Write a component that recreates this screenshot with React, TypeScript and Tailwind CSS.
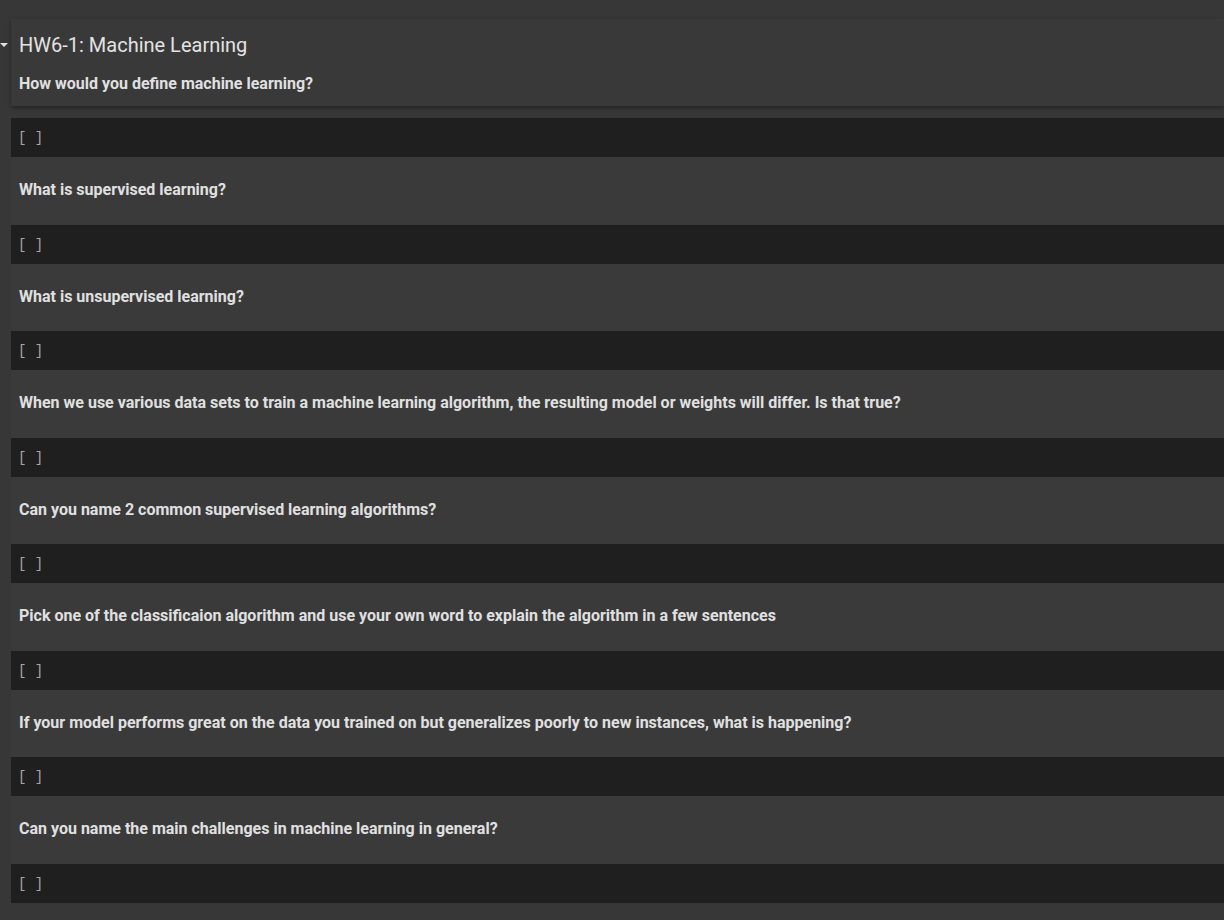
import React from "react";

const questions = [
  "How would you define machine learning?",
  "What is supervised learning?",
  "What is unsupervised learning?",
  "When we use various data sets to train a machine learning algorithm, the resulting model or weights will differ. Is that true?",
  "Can you name 2 common supervised learning algorithms?",
  "Pick one of the classificaion algorithm and use your own word to explain the algorithm in a few sentences",
  "If your model performs great on the data you trained on but generalizes poorly to new instances, what is happening?",
  "Can you name the main challenges in machine learning in general?",
];

function CodeCell() {
  return (
    <div className="h-[39px] bg-[#1f1f1f] flex items-center pl-[7px]">
      <span className="text-[14px] leading-[16px] text-[#a6a6a6] pt-[1px]" style={{ fontFamily: '"Liberation Mono", monospace' }}>
        [&nbsp;]
      </span>
    </div>
  );
}

export default function App() {
  return (
    <div
      className="w-[1224px] h-[920px] overflow-hidden bg-[#373737] pt-[19px]"
      style={{ fontFamily: 'Roboto, "Noto Sans", sans-serif' }}
    >
      <div className="relative">
        <span className="absolute left-0 top-[24px] w-0 h-0 border-l-[4px] border-r-[4px] border-t-[4px] border-l-transparent border-r-transparent border-t-[#e0e0e0]" />
        <div className="ml-[11px] h-[87px] bg-[#393939] shadow-[0_2px_4px_rgba(0,0,0,0.35)] pl-[8px] pt-[14px] flex flex-col">
          <div className="text-[20px] leading-[24px] text-[#e3e3e3]">HW6-1: Machine Learning</div>
          <div className="mt-[17px] text-[16px] leading-[20px] font-bold text-[#e0e0e0]">{questions[0]}</div>
        </div>
      </div>
      <div className="ml-[11px] mt-[12px] flex flex-col">
        {questions.map((q, i) => (
          <React.Fragment key={i}>
            {i > 0 && (
              <div className="h-[67.57px] bg-[#3a3a3a] pl-[8px] pt-[23px]">
                <div className="text-[16px] leading-[20px] font-bold text-[#e0e0e0]">{q}</div>
              </div>
            )}
            <CodeCell />
          </React.Fragment>
        ))}
      </div>
    </div>
  );
}
